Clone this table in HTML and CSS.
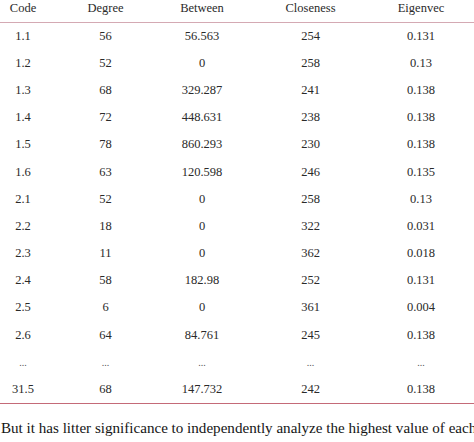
FILE: index.html
```html
<!DOCTYPE html>
<html>
<head>
<meta charset="utf-8">
<link rel="stylesheet" href="styles.css">
</head>
<body>
<div class="page">
  <div class="table">
    <div class="row head">
      <span>Code</span><span>Degree</span><span>Between</span><span>Closeness</span><span>Eigenvec</span>
    </div>
    <div class="body">
      <div class="row"><span>1.1</span><span>56</span><span>56.563</span><span>254</span><span>0.131</span></div>
      <div class="row"><span>1.2</span><span>52</span><span>0</span><span>258</span><span>0.13</span></div>
      <div class="row"><span>1.3</span><span>68</span><span>329.287</span><span>241</span><span>0.138</span></div>
      <div class="row"><span>1.4</span><span>72</span><span>448.631</span><span>238</span><span>0.138</span></div>
      <div class="row"><span>1.5</span><span>78</span><span>860.293</span><span>230</span><span>0.138</span></div>
      <div class="row"><span>1.6</span><span>63</span><span>120.598</span><span>246</span><span>0.135</span></div>
      <div class="row"><span>2.1</span><span>52</span><span>0</span><span>258</span><span>0.13</span></div>
      <div class="row"><span>2.2</span><span>18</span><span>0</span><span>322</span><span>0.031</span></div>
      <div class="row"><span>2.3</span><span>11</span><span>0</span><span>362</span><span>0.018</span></div>
      <div class="row"><span>2.4</span><span>58</span><span>182.98</span><span>252</span><span>0.131</span></div>
      <div class="row"><span>2.5</span><span>6</span><span>0</span><span>361</span><span>0.004</span></div>
      <div class="row"><span>2.6</span><span>64</span><span>84.761</span><span>245</span><span>0.138</span></div>
      <div class="row dots"><span>...</span><span>...</span><span>...</span><span>...</span><span>...</span></div>
      <div class="row"><span>31.5</span><span>68</span><span>147.732</span><span>242</span><span>0.138</span></div>
    </div>
  </div>
  <p class="text">But it has litter significance to independently analyze the highest value of each</p>
</div>
</body>
</html>
```

FILE: styles.css
```css
html, body {
  margin: 0;
  padding: 0;
  background: #ffffff;
}
.page {
  width: 474px;
  height: 442px;
  overflow: hidden;
  font-family: "Liberation Serif", "DejaVu Serif", serif;
}
.table {
  margin-top: -5px;
  color: #2a2a2a;
  font-size: 12.5px;
}
.row {
  display: grid;
  grid-template-columns: 46px 119px 74px 143px 78px;
  height: 27.2px;
  align-items: center;
  text-align: center;
}
.row.head {
  border-bottom: 1px solid #d4a9b3;
  height: 26.5px;
}
.body {
  border-bottom: 1px solid #c46a78;
}
.dots span {
  font-size: 10px;
  color: #555;
}
.text {
  margin: 16px 0 0 1px;
  font-size: 15.1px;
  color: #151515;
  white-space: nowrap;
}
```
